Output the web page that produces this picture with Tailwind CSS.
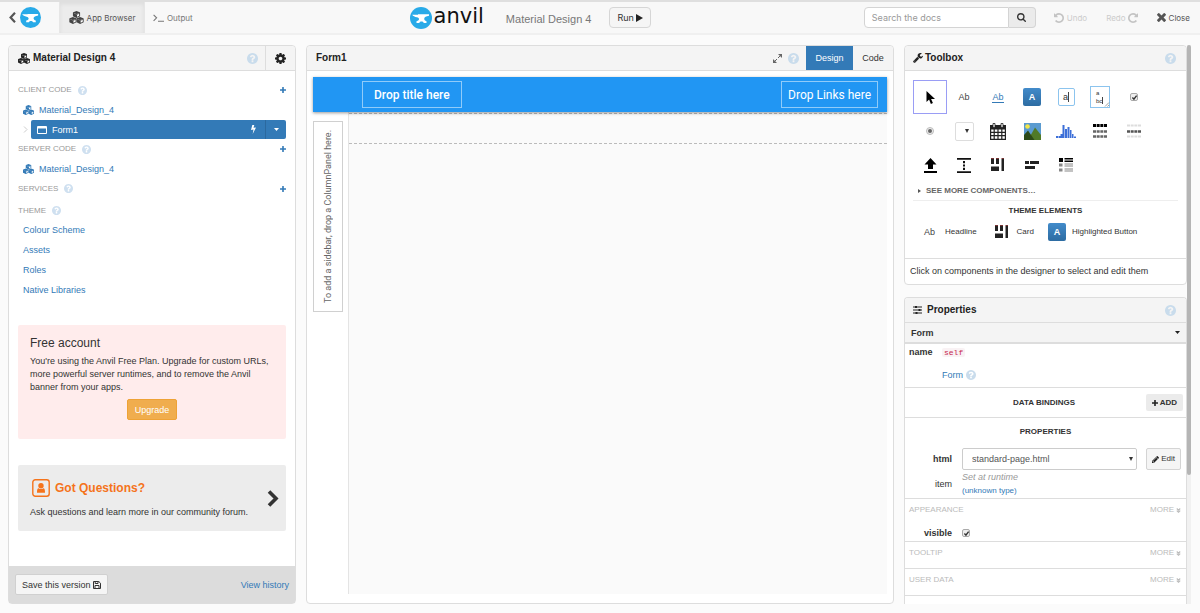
<!DOCTYPE html>
<html lang="en">
<head>
<meta charset="utf-8">
<meta name="viewport" content="width=device-width, initial-scale=1">
<title>Material Design 4 - Anvil</title>
<script src="https://cdn.jsdelivr.net/npm/@tailwindcss/browser@4"></script>
</head>
<body class="flex h-screen flex-col overflow-hidden bg-[#fbfbfb] font-['Liberation_Sans',Arial,sans-serif] text-[9px] leading-3 text-[#333]">

<svg class="hidden" aria-hidden="true">
  <symbol id="cog" viewBox="0 128 1536 1536"><path d="M1024 896q0-106-75-181t-181-75-181 75-75 181 75 181 181 75 181-75 75-181zm512-109v222q0 12-8 23t-20 13l-185 28q-19 54-39 91 35 50 107 138 10 12 10 25t-9 23q-27 37-99 108t-94 71q-12 0-26-9l-138-108q-44 23-91 38-16 136-29 186-7 28-36 28h-222q-14 0-24.500-8.500t-11.500-21.500l-28-184q-49-16-90-37l-141 107q-10 9-25 9-14 0-25-11-126-114-165-168-7-10-7-23 0-12 8-23 15-21 51-66.500t54-70.500q-27-50-41-99l-183-27q-13-2-21-12.500t-8-23.500v-222q0-12 8-23t19-13l186-28q14-46 39-92-40-57-107-138-10-12-10-24 0-10 9-23 26-36 98.500-107.500t94.500-71.500q13 0 26 10l138 107q44-23 91-38 16-136 29-186 7-28 36-28h222q14 0 24.500 8.500t11.500 21.500l28 184q49 16 90 37l142-107q9-9 24-9 13 0 25 10 129 119 165 170 7 8 7 22 0 12-8 23-15 21-51 66.500t-54 70.500q26 50 41 98l183 28q13 2 21 12.500t8 23.500z"/></symbol>
  <symbol id="undo" viewBox="128 128 1536 1536"><path d="M1664 896q0 156-61 298t-164 245-245 164-298 61q-172 0-327-72.500t-264-204.500q-7-10-6.500-22.500t8.500-20.500l137-138q10-9 25-9 16 2 23 12 73 95 179 147t225 52q104 0 198.500-40.500t163.500-109.500 109.500-163.500 40.500-198.500-40.500-198.500-109.500-163.500-163.500-109.500-198.500-40.500q-98 0-188 35.500t-160 101.500l137 138q31 30 14 69-17 40-59 40h-448q-26 0-45-19t-19-45v-448q0-42 40-59 39-17 69 14l130 129q107-101 244.500-156.500t284.500-55.500q156 0 298 61t245 164 164 245 61 298z"/></symbol>
  <symbol id="times" viewBox="300 300 1192 1192"><path d="M1490 1322q0 40-28 68l-136 136q-28 28-68 28t-68-28l-294-294-294 294q-28 28-68 28t-68-28l-136-136q-28-28-28-68t28-68l294-294-294-294q-28-28-28-68t28-68l136-136q28-28 68-28t68 28l294 294 294-294q28-28 68-28t68 28l136 136q28 28 28 68t-28 68l-294 294 294 294q28 28 28 68z" transform="translate(0 -64)"/></symbol>
  <symbol id="help" viewBox="128 128 1536 1536"><path d="M1024 1376v-192q0-14-9-23t-23-9h-192q-14 0-23 9t-9 23v192q0 14 9 23t23 9h192q14 0 23-9t9-23zm256-672q0-88-55.500-163t-138.500-116-170-41q-243 0-371 213-15 24 8 42l132 100q7 6 19 6 16 0 25-12 53-68 86-92 34-24 86-24 48 0 85.500 26t37.500 59q0 38-20 61t-68 45q-63 28-115.500 86.500t-52.500 125.500v36q0 14 9 23t23 9h192q14 0 23-9t9-23q0-19 21.500-49.500t54.500-49.500q32-18 49-28.500t46-35 44.500-48 28-60.500 12.500-81zm384 192q0 209-103 385.500t-279.500 279.500-385.500 103-385.500-103-279.500-279.500-103-385.500 103-385.500 279.500-279.500 385.500-103 385.500 103 279.500 279.500 103 385.500z"/></symbol>
  <symbol id="plus" viewBox="192 128 1408 1408"><path d="M1600 736v192q0 40-28 68t-68 28h-416v416q0 40-28 68t-68 28h-192q-40 0-68-28t-28-68v-416h-416q-40 0-68-28t-28-68v-192q0-40 28-68t68-28h416v-416q0-40 28-68t68-28h192q40 0 68 28t28 68v416h416q40 0 68 28t28 68z"/></symbol>
  <symbol id="search" viewBox="64 128 1664 1664"><path d="M1216 832q0-185-131.500-316.500t-316.500-131.500-316.500 131.500-131.500 316.500 131.500 316.500 316.500 131.500 316.500-131.500 131.500-316.500zm512 832q0 52-38 90t-90 38q-54 0-90-38l-343-342q-179 124-399 124-143 0-273.500-55.500t-225-150-150-225-55.500-273.500 55.500-273.500 150-225 225-150 273.500-55.500 273.500 55.500 225 150 150 225 55.500 273.500q0 220-124 399l343 343q37 37 37 90z"/></symbol>
  <symbol id="wrench" viewBox="64 128 1664 1664"><path d="M448 1472q0-26-19-45t-45-19-45 19-19 45 19 45 45 19 45-19 19-45zm644-420l-682 682q-37 37-90 37-52 0-91-37l-106-108q-38-36-38-90 0-53 38-91l681-681q39 98 114.500 173.500t173.500 114.500zm634-435q0 39-23 106-47 134-164.500 217.500t-258.500 83.500q-185 0-316.500-131.500t-131.500-316.500 131.500-316.500 316.500-131.500q58 0 121.500 16.500t107.500 46.500q16 11 16 28t-16 28l-293 169v224l193 107q5-3 79-48.500t135.500-81 70.500-35.500q15 0 23.500 10t8.500 25z"/></symbol>
  <symbol id="pencil" viewBox="128 128 1536 1536"><path d="M491 1536l91-91-235-235-91 91v107h128v128h107zm523-928q0-22-22-22-10 0-17 7l-542 542q-7 7-7 17 0 22 22 22 10 0 17-7l542-542q7-7 7-17zm-54-192l416 416-832 832h-416v-416zm683 96q0 53-37 90l-166 166-416-416 166-165q36-38 90-38 53 0 91 38l235 234q37 39 37 91z"/></symbol>
  <symbol id="cubes" viewBox="0.8 0 26.400 24">
    <g id="cube1"><path fill="currentColor" d="M14 0l6 2.300a1 1 0 0 1 .6 1v6.400l-6.600 3.300-6.600-3.300V3.300a1 1 0 0 1 .6-1z"/><path fill="#fff" d="M15 6.800l3.900-1.600v3.700L15 10.800z"/><path fill="#fff" opacity=".5" d="M9.300 3.700l4.700 1.900 4.700-1.900v.9L14 6.500 9.300 4.600z"/></g>
    <use href="#cube1" x="-6.600" y="11"/><use href="#cube1" x="6.600" y="11"/>
  </symbol>
  <symbol id="anvil" viewBox="0 0 44 44"><circle cx="22" cy="22" r="22" fill="#28aae8"/><path fill="#fff" d="M16 14.500h22v3.200c-6 .8-9 2.800-9.500 5.300-.3 2.500 1.500 4.500 4.500 5.500v3.500h-5.500c-1-2-2.500-2.800-4.500-2.800s-3.500.8-4.500 2.800h-5.500v-3.500c3.500-1 5.500-2.500 5-5-.5-2-2-2.800-4-3.200-4.500-.8-8-2.300-9.500-5h11.500z"/></symbol>
  <symbol id="tick" viewBox="0 0 10 10"><path fill="none" stroke="#333" stroke-width="2" d="M2 5l2.200 2.400L8 2.300"/></symbol>
  <symbol id="more" viewBox="0 0 10 10"><path fill="none" stroke="currentColor" stroke-width="2.200" d="M1.500 1L5 4.300 8.500 1M1.500 5.200L5 8.500l3.500-3.300"/></symbol>
  <symbol id="card" viewBox="0 0 14 14"><path fill="#222" d="M0 1h3v5H0zM5 1h3v5H5zM0 8.500h8V13H0zM10.500 1H13v12h-2.500z"/><path fill="#733" d="M0 0h3v1H0zM5 0h3v1H5zM10.500 0H13v1h-2.500z"/></symbol>
</svg>

<header class="flex h-[35px] shrink-0 items-stretch border-t-2 border-b-2 border-t-[#dfdfdf] border-b-[#f0f0f0] bg-[#f8f8f8] font-[Inter,sans-serif] text-[8px] text-[#666]">
  <a href="#" aria-label="Back to apps" class="flex w-[59px] shrink-0 items-center gap-1 pl-[9px]">
    <svg class="h-[11px] w-[7px]" viewBox="0 0 7 11"><path fill="none" stroke="#555" stroke-width="2.200" d="M6 .8L1.600 5.500 6 10.200"/></svg>
    <svg class="size-[21px]"><use href="#anvil"/></svg>
  </a>
  <button class="flex w-[86px] shrink-0 items-center justify-center gap-[3px] border-x border-[#e6e6e6] bg-[#ececec] text-[#555] shadow-[inset_0_2px_4px_#0001]"><svg class="h-[13px] w-[15px] text-[#444]"><use href="#cubes"/></svg>App Browser</button>
  <button class="flex shrink-0 items-center gap-[3px] pl-2 text-[#777]"><svg class="h-2 w-[11px]" viewBox="0 0 11 8"><path fill="none" stroke="#777" stroke-width="1.100" d="M.6.8L3.600 3.800.6 6.800M5 7.200h6"/></svg>Output</button>
  <div class="flex flex-1 items-center justify-center gap-[22px] pl-1">
    <div class="flex items-center gap-[2px]"><svg class="size-[22px]"><use href="#anvil"/></svg><span class="-mt-1 font-['DejaVu_Sans',sans-serif] text-[21px] leading-[22px] text-[#111]">anvil</span></div>
    <span class="pt-0.5 font-['Liberation_Sans',sans-serif] text-[11px] text-[#777]">Material Design 4</span>
    <button class="-ml-1 flex h-[21px] items-center gap-[2px] rounded-sm border border-[#d6d6d6] bg-[#f5f5f5] px-[7px] text-[9px] text-[#333]">Run<svg class="h-2 w-[7px]" viewBox="0 0 7 8"><path fill="#222" d="M0 0l7 4-7 4z"/></svg></button>
  </div>
  <form class="flex shrink-0 items-center" onsubmit="return false">
    <input type="text" aria-label="Search the docs" placeholder="Search the docs" class="h-[21px] w-[145px] rounded-l-sm border border-[#d4d4d4] bg-white px-[7px] text-[9px] placeholder:text-[#999]">
    <button aria-label="Search" class="flex h-[21px] w-[27px] items-center justify-center rounded-r-sm border border-l-0 border-[#d4d4d4] bg-[#ebebeb]"><svg class="size-[9px] fill-[#333]"><use href="#search"/></svg></button>
  </form>
  <button class="flex shrink-0 items-center gap-[3px] pl-[18px] text-[#ccc]"><svg class="size-[10px] fill-[#c4c4c4]"><use href="#undo"/></svg>Undo</button>
  <button class="flex shrink-0 items-center gap-[2px] pl-[19px] text-[#ccc]">Redo<svg class="size-[10px] -scale-x-100 fill-[#c4c4c4]"><use href="#undo"/></svg></button>
  <button class="flex shrink-0 items-center gap-[3px] pr-[10px] pl-[19px] text-[#555]"><svg class="size-[9px] fill-[#555]"><use href="#times"/></svg>Close</button>
</header>

<main class="flex min-h-0 flex-1 gap-[10px] pt-[10px] pr-[9px] pb-[9px] pl-2">

  <!-- App browser -->
  <section class="flex w-[288px] shrink-0 flex-col rounded-sm border border-[#ddd] bg-white">
    <div class="flex h-[25px] shrink-0 items-center rounded-t-sm border-b border-[#ddd] bg-[#f4f4f4] pl-[9px]">
      <svg class="mr-[3px] h-[11px] w-3 text-[#222]"><use href="#cubes"/></svg>
      <h2 class="flex-1 text-[10px] font-bold text-[#222]">Material Design 4</h2>
      <button aria-label="Help"><svg class="mr-[7px] size-[11px] fill-[#c9dcec]"><use href="#help"/></svg></button>
      <button aria-label="Settings" class="flex h-full w-[30px] items-center justify-center border-l border-[#ddd]"><svg class="size-[11px] fill-[#222]"><use href="#cog"/></svg></button>
    </div>
    <div class="flex min-h-0 flex-1 flex-col px-[9px] pt-[9px] text-[#337ab7]">
      <div class="flex h-5 shrink-0 items-center gap-[6px] text-[8px] text-[#999]">CLIENT CODE<svg class="size-[9px] fill-[#cfe0f0]"><use href="#help"/></svg><button aria-label="Add client code" class="ml-auto"><svg class="size-[6px] fill-[#337ab7]"><use href="#plus"/></svg></button></div>
      <a href="#" class="flex h-5 shrink-0 items-center gap-[5px] pl-[5px]"><svg class="h-[10px] w-[11px]"><use href="#cubes"/></svg>Material_Design_4</a>
      <div class="flex h-[19px] shrink-0 items-center">
        <svg class="ml-[5px] h-[7px] w-[8px]" viewBox="0 0 8 7"><path fill="none" stroke="#ccc" d="M1 .5l3 3-3 3"/></svg>
        <a href="#" class="flex h-full flex-1 items-center gap-[5px] rounded-l-xs bg-[#337ab7] pr-[9px] pl-[6px] text-white"><svg class="h-2 w-[10px]" viewBox="0 0 10 8"><path fill="#fff" fill-rule="evenodd" d="M1 0h8a1 1 0 0 1 1 1v6a1 1 0 0 1-1 1H1a1 1 0 0 1-1-1V1a1 1 0 0 1 1-1zm0 2.500V7h8V2.500z"/></svg><span class="flex-1">Form1</span><svg class="h-[9px] w-[5px]" viewBox="0 0 5 9"><path fill="#fff" d="M1.300 0h2L2.500 2.800 5 2.400 1.700 9l.8-4.400L0 5z"/></svg></a>
        <button aria-label="Form1 menu" class="flex h-full w-[21px] items-center justify-center rounded-r-xs border-l border-[#2b699f] bg-[#337ab7]"><svg class="h-[3px] w-[5px]" viewBox="0 0 5 3"><path fill="#fff" d="M0 0h5L2.500 3z"/></svg></button>
      </div>
      <div class="flex h-5 shrink-0 items-center gap-[6px] text-[8px] text-[#999]">SERVER CODE<svg class="size-[9px] fill-[#cfe0f0]"><use href="#help"/></svg><button aria-label="Add server code" class="ml-auto"><svg class="size-[6px] fill-[#337ab7]"><use href="#plus"/></svg></button></div>
      <a href="#" class="flex h-5 shrink-0 items-center gap-[5px] pl-[5px]"><svg class="h-[10px] w-[11px]"><use href="#cubes"/></svg>Material_Design_4</a>
      <div class="flex h-[19px] shrink-0 items-center gap-[6px] text-[8px] text-[#999]">SERVICES<svg class="size-[9px] fill-[#cfe0f0]"><use href="#help"/></svg><button aria-label="Add service" class="ml-auto"><svg class="size-[6px] fill-[#337ab7]"><use href="#plus"/></svg></button></div>
      <div class="mt-[3px] flex h-[19px] shrink-0 items-center gap-[6px] text-[8px] text-[#999]">THEME<svg class="size-[9px] fill-[#cfe0f0]"><use href="#help"/></svg></div>
      <nav class="flex shrink-0 flex-col items-start gap-2 pt-1 pl-[5px]">
        <a href="#">Colour Scheme</a><a href="#">Assets</a><a href="#">Roles</a><a href="#">Native Libraries</a>
      </nav>
      <div class="mt-[29px] h-[114px] shrink-0 rounded-xs bg-[#ffecec] px-3 pt-[11px] text-[#333]">
        <h3 class="text-[12px] leading-[14px]">Free account</h3>
        <p class="pt-[5px] leading-[13px]">You're using the Anvil Free Plan. Upgrade for custom URLs, more powerful server runtimes, and to remove the Anvil banner from your apps.</p>
        <div class="pt-[5px] text-center"><button class="h-[21px] rounded-xs border border-[#eea236] bg-[#f0ad4e] px-[7px] text-white">Upgrade</button></div>
      </div>
      <a href="#" class="mt-[26px] flex h-[66px] shrink-0 items-center rounded-xs bg-[#ececec] pr-[7px] pl-3 text-[#333]">
        <span class="flex-1">
          <span class="flex items-center gap-[5px] pl-[2px] text-[12px] font-bold text-[#f5731b]"><svg class="size-[18px]" viewBox="0 0 18 18"><rect x=".8" y=".8" width="16.400" height="16.400" rx="2.500" fill="none" stroke="#f5731b" stroke-width="1.400"/><circle cx="9" cy="6.800" r="2.700" fill="#f5731b"/><path fill="#f5731b" d="M5 13.800c0-3 .3-4.600 1.700-4.600 1.300 1.200 3.300 1.200 4.600 0 1.400 0 1.700 1.600 1.700 4.600z"/></svg>Got Questions?</span>
          <span class="block pt-[9px]">Ask questions and learn more in our community forum.</span>
        </span>
        <svg class="h-[17px] w-3" viewBox="0 0 12 17"><path fill="none" stroke="#333" stroke-width="3.600" d="M2 1.500l7 7-7 7"/></svg>
      </a>
    </div>
    <div class="flex h-[37px] shrink-0 items-center justify-between bg-[#dcdcdc] px-[6px]">
      <button class="flex h-[21px] items-center gap-[2px] rounded-xs border border-[#d0d0d0] bg-[#f5f5f5] px-[6px]">Save this version<svg class="size-2" viewBox="0 0 8 8"><path fill="none" stroke="#333" d="M.5.500h5.300l1.700 1.700v5.300h-7zM2 7.500v-3h4v3M2.200.500v2h2.800v-2"/></svg></button>
      <a href="#" class="text-[#337ab7]">View history</a>
    </div>
  </section>

  <!-- Form designer -->
  <section class="flex min-w-0 flex-1 flex-col rounded-sm border border-[#ddd] bg-white">
    <div class="flex h-[25px] shrink-0 items-center rounded-t-sm border-b border-[#ddd] bg-[#f4f4f4] pl-[9px]">
      <h2 class="flex-1 text-[10px] font-bold text-[#222]">Form1</h2>
      <button aria-label="Expand" class="mr-[6px]"><svg class="size-[9px]" viewBox="0 0 9 9"><path fill="#666" d="M5 0h4v4zM0 5v4h4z"/><path stroke="#666" d="M1.500 7.500L4 5M5 4l2.500-2.500"/></svg></button>
      <button aria-label="Help" class="mr-[7px]"><svg class="size-[11px] fill-[#c9dcec]"><use href="#help"/></svg></button>
      <button class="h-full w-[47px] bg-[#337ab7] text-white">Design</button>
      <button class="h-full w-10">Code</button>
    </div>
    <div class="flex min-h-0 flex-1 flex-col px-[6px] pt-[6px] pb-[9px]">
      <div class="z-10 flex h-[35px] shrink-0 items-center justify-between bg-[#2196f3] pr-[9px] pl-[49px] font-[Roboto,sans-serif] text-[12px] text-white shadow-[0_1px_3px_#0006]">
        <div class="flex h-[27px] items-center border border-white/50 px-[11px] font-medium">Drop title here</div>
        <div class="flex h-[27px] items-center border border-white/50 px-[6px]">Drop Links here</div>
      </div>
      <div class="flex min-h-0 flex-1">
        <div class="w-9 shrink-0 border-r border-[#e4e4e4] pt-[9px]">
          <div class="flex h-[191px] w-[30px] items-center justify-center border border-[#d0d0d0]"><span class="rotate-180 font-[Roboto,sans-serif] text-[9px] text-[#666] [writing-mode:vertical-rl]">To add a sidebar, drop a ColumnPanel here.</span></div>
        </div>
        <div class="min-w-0 flex-1 bg-[#fafafa] pt-px"><div class="h-[31px] border-y border-dashed border-[#bbb]"></div></div>
      </div>
    </div>
  </section>

  <!-- Toolbox and properties -->
  <div class="flex w-[287px] shrink-0">
    <div class="flex min-w-0 flex-1 flex-col gap-3">
      <section class="h-[240px] shrink-0 rounded-sm border border-[#ddd] bg-white">
        <div class="flex h-[25px] items-center rounded-t-sm border-b border-[#ddd] bg-[#f4f4f4] pr-[10px] pl-2">
          <svg class="mr-[2px] size-[10px] fill-[#222]"><use href="#wrench"/></svg><h2 class="flex-1 text-[10px] font-bold text-[#222]">Toolbox</h2>
          <button aria-label="Help"><svg class="size-[11px] fill-[#c9dcec]"><use href="#help"/></svg></button>
        </div>
        <div class="px-2 pt-[9px]">
          <div class="grid grid-cols-[repeat(7,34px)] auto-rows-[34px] *:flex *:items-center *:justify-center">
            <button aria-label="Select" class="border border-[#9a9df5]"><svg class="h-[13px] w-[9px]" viewBox="0 0 9 13"><path d="M.5 0v11l2.600-2.400L4.900 13l2-.9-1.800-4.200H9z"/></svg></button>
            <button class="text-[#444]">Ab</button>
            <button class="text-[#337ab7]"><span class="border-b border-[#337ab7] leading-[10px]">Ab</span></button>
            <button><span class="flex size-[18px] items-center justify-center rounded-xs bg-linear-to-b from-[#428bca] to-[#2d6ca2] font-bold text-white">A</span></button>
            <button><span class="flex h-[18px] w-[17px] items-center justify-center rounded-xs border border-[#8cc4ee]"><span class="border-r border-[#444] leading-[10px]">a</span></span></button>
            <button><svg class="h-[22px] w-5" viewBox="0 0 20 22"><rect x=".5" y=".5" width="19" height="21" fill="#fff" stroke="#8cc4ee"/><path fill="none" stroke="#888" stroke-width=".8" d="M15 20.500l4-4M17.500 20.500l1.500-1.500"/><path stroke="#444" d="M12.500 11v7"/><text x="6" y="9" font-size="6" fill="#333">a</text><text x="6" y="17" font-size="6" fill="#333">bc</text></svg></button>
            <label class="relative"><input type="checkbox" checked aria-label="CheckBox" class="size-2 appearance-none rounded-xs border border-[#aaa] bg-[#eee]"><svg class="pointer-events-none absolute size-[7px]"><use href="#tick"/></svg></label>
            <label class="relative"><input type="radio" checked aria-label="RadioButton" class="size-2 appearance-none rounded-full border border-[#bbb] bg-[#eee]"><span class="pointer-events-none absolute size-1 rounded-full bg-[#666]"></span></label>
            <button aria-label="DropDown"><span class="flex size-[19px] items-center justify-end rounded-xs border border-[#ddd] pr-1"><svg class="h-1 w-[4px]" viewBox="0 0 4 4"><path fill="#333" d="M0 0h4L2 4z"/></svg></span></button>
            <button aria-label="DatePicker"><svg class="h-[17px] w-4" viewBox="0 0 16 17"><path fill="#222" fill-rule="evenodd" d="M0 2h16v15H0zM1.200 6.500v2.200h2.400V6.500zm3.600 0v2.200h2.600V6.500zm3.800 0v2.200h2.600V6.500zm3.800 0v2.200h2.400V6.500zM1.200 9.900v2.200h2.400V9.900zm3.600 0v2.200h2.600V9.900zm3.800 0v2.200h2.600V9.900zm3.800 0v2.200h2.400V9.900zM1.200 13.300v2.400h2.400v-2.400zm3.600 0v2.400h2.600v-2.400zm3.800 0v2.400h2.600v-2.400zm3.800 0v2.400h2.400v-2.400z"/><path fill="#fff" stroke="#222" stroke-width=".8" d="M3 .500h2v4H3zM11 .500h2v4h-2z"/></svg></button>
            <button aria-label="Image"><svg class="h-[17px] w-[17px]" viewBox="0 0 17 17"><path fill="#5b9bd0" d="M0 0h17v17H0z"/><circle cx="3.500" cy="3.500" r="2.300" fill="#f2e64a"/><path fill="#507a28" d="M4 17l7-12.500L17 12v5z"/><path fill="#2c4a18" d="M0 17v-5l4-4.500L10.500 17z"/></svg></button>
            <button aria-label="Plot"><svg class="h-[14px] w-5" viewBox="0 0 20 14"><path fill="#3c6fd8" d="M0 12h2v2H0zM2.500 12h2v2h-2zM4.500 10h2v4h-2zM6.500 1h2v13h-2zM9 5h2v9H9zM11.500 3h2v11h-2zM14 6h1.500v8H14zM16 10h1.500v4H16zM18 12.500h2V14h-2z"/></svg></button>
            <button aria-label="DataGrid"><svg class="h-[14px] w-[14px]" viewBox="0 0 14 14" fill="none" stroke-dasharray="3 .67"><path stroke="#000" stroke-width="3" d="M0 1.500h14"/><path stroke="#666" stroke-width="2.300" d="M0 7.500h14M0 12.500h14"/></svg></button>
            <button aria-label="DataRowPanel"><svg class="h-[14px] w-[14px]" viewBox="0 0 14 14" fill="none" stroke-dasharray="3 .67"><path stroke="#ddd" stroke-width="2" d="M0 1.500h14M0 12.500h14"/><path stroke="#555" stroke-width="2.300" d="M0 7.500h14"/></svg></button>
            <button aria-label="FileLoader"><svg class="h-[15px] w-[13px]" viewBox="0 0 13 15"><path d="M6.500 0l6 6.500H9V11H4V6.500H.5zM0 13h13v2H0z"/></svg></button>
            <button aria-label="Spacer"><svg class="h-[15px] w-[14px]" viewBox="0 0 14 15"><path fill="#111" d="M0 0h14v1.700H0zM0 13.300h14V15H0zM6 3h2v2.300H6zM6 6.500h2v2H6zM6 9.700h2V12H6z"/></svg></button>
            <button aria-label="XYPanel"><svg class="size-[14px]"><use href="#card"/></svg></button>
            <button aria-label="FlowPanel"><svg class="h-[9px] w-[14px]" viewBox="0 0 14 9"><path fill="#222" d="M0 0h4v3H0zM5 0h9v3H5zM0 5h10v3H0z"/></svg></button>
            <button aria-label="RepeatingPanel"><svg class="size-[14px]" viewBox="0 0 14 14"><path d="M0 0h4v4H0zM5.500 0H14v1.500H5.500zM5.500 2.500H14V4H5.500z"/><path fill="#888" d="M0 5.500h3.500v3H0zM5.500 5.500H14v1H5.500zM5.500 7.500H14v1H5.500zM0 10.500h3.500v3H0zM5.500 10.500H14v1H5.500zM5.500 12.500H14v1H5.500z"/></svg></button>
          </div>
          <button class="flex h-[19px] w-full items-center gap-[5px] border-b border-[#eee] pl-[5px] text-[8px] font-bold text-[#666]"><svg class="h-1 w-[3px]" viewBox="0 0 3 4"><path fill="#555" d="M0 0l3 2-3 2z"/></svg>SEE MORE COMPONENTS…</button>
          <h3 class="h-[18px] pt-1 text-center text-[8px] font-bold">THEME ELEMENTS</h3>
          <div class="flex h-[26px] items-center pl-[11px] text-[8px]">
            <button class="flex items-center gap-[10px]"><span class="text-[9px] text-[#444]">Ab</span>Headline</button>
            <button class="flex items-center gap-2 pl-[18px]"><svg class="size-[14px]"><use href="#card"/></svg>Card</button>
            <button class="flex items-center gap-[6px] pl-[14px]"><span class="flex size-[18px] items-center justify-center rounded-xs bg-linear-to-b from-[#428bca] to-[#2d6ca2] text-[9px] font-bold text-white">A</span>Highlighted Button</button>
          </div>
        </div>
        <p class="mt-[13px] border-t border-[#ddd] pt-[6px] pl-[5px]">Click on components in the designer to select and edit them</p>
      </section>

      <section class="min-h-0 flex-1 overflow-hidden rounded-t-sm border border-b-0 border-[#ddd] bg-white">
        <div class="flex h-[25px] items-center border-b border-[#ddd] bg-[#f4f4f4] pr-[10px] pl-2">
          <svg class="mr-[5px] h-2 w-[9px]" viewBox="0 0 9 8"><path fill="#222" d="M0 .500h9v1H0zM0 3.500h9v1H0zM0 6.500h9v1H0zM2 0h2v2H2zM5.500 3h2v2h-2zM2.500 6h2v2h-2z"/></svg><h2 class="flex-1 text-[10px] font-bold text-[#222]">Properties</h2>
          <button aria-label="Help"><svg class="size-[11px] fill-[#c9dcec]"><use href="#help"/></svg></button>
        </div>
        <button class="flex h-[21px] w-full items-center justify-between border-b-2 border-[#ddd] bg-[#f4f4f4] px-[6px] font-bold">Form<svg class="h-[3px] w-[5px]" viewBox="0 0 5 3"><path fill="#222" d="M0 0h5L2.500 3z"/></svg></button>
        <div class="grid h-11 grid-cols-[33px_1fr] content-between border-b border-[#ddd] pt-[2px] pb-[6px] pl-1">
          <b>name</b><div><code class="rounded-xs bg-[#f9f2f4] px-[2px] font-['Liberation_Mono',monospace] text-[8px] text-[#c7254e]">self</code></div>
          <a href="#" class="col-start-2 flex items-center gap-[3px] text-[#337ab7]">Form<svg class="size-[10px] fill-[#c9dcec]"><use href="#help"/></svg></a>
        </div>
        <div class="grid h-[30px] grid-cols-[1fr_auto_1fr] items-center border-b border-[#ddd] pr-[3px] text-[8px] font-bold">
          <h3 class="col-start-2">DATA BINDINGS</h3><button class="flex h-[17px] items-center gap-[2px] justify-self-end rounded-xs bg-[#ebebeb] px-[6px]"><svg class="size-[6px] fill-[#222]"><use href="#plus"/></svg>ADD</button>
        </div>
        <div class="border-b border-[#ddd]">
          <h3 class="h-[30px] pt-2 text-center text-[8px] font-bold">PROPERTIES</h3>
          <div class="flex h-[22px] items-center">
            <label for="html" class="w-[47px] text-right font-bold">html</label>
            <div class="relative mr-[9px] ml-[10px] flex-1">
              <select id="html" class="h-[22px] w-full appearance-none rounded-xs border border-[#ccc] bg-white pl-[9px] text-[#555]"><option>standard-page.html</option></select>
              <svg class="pointer-events-none absolute top-[9px] right-1 h-1 w-[4px]" viewBox="0 0 4 4"><path fill="#333" d="M0 0h4L2 4z"/></svg>
            </div>
            <button class="mr-[5px] flex h-[22px] items-center gap-[2px] rounded-xs border border-[#d4d4d4] bg-[#f5f5f5] px-[5px] text-[8px]"><svg class="size-[7px] fill-[#222]"><use href="#pencil"/></svg>Edit</button>
          </div>
          <div class="flex h-7 items-center">
            <span class="w-[47px] text-right">item</span>
            <div class="ml-[10px] leading-[13px]"><i class="block text-[#999]">Set at runtime</i><a href="#" class="block text-[8px] text-[#337ab7]">(unknown type)</a></div>
          </div>
        </div>
        <div class="h-[43px] border-b border-[#ddd] pt-[5px] pr-[5px] pl-1">
          <div class="flex justify-between text-[8px] text-[#bbb]"><span>APPEARANCE</span><button class="flex items-center gap-[2px]">MORE<svg class="size-[5px]"><use href="#more"/></svg></button></div>
          <label class="relative mt-[11px] flex items-center gap-[10px]"><b class="w-[43px] text-right">visible</b><span class="relative flex items-center justify-center"><input type="checkbox" checked class="size-2 appearance-none rounded-xs border border-[#aaa] bg-[#eee]"><svg class="pointer-events-none absolute size-[7px]"><use href="#tick"/></svg></span></label>
        </div>
        <div class="flex h-[27px] justify-between border-b border-[#ddd] pt-[5px] pr-[5px] pl-1 text-[8px] leading-3 text-[#bbb]"><span>TOOLTIP</span><button class="flex h-3 items-center gap-[2px]">MORE<svg class="size-[5px]"><use href="#more"/></svg></button></div>
        <div class="flex h-[27px] justify-between border-b border-[#ddd] pt-[5px] pr-[5px] pl-1 text-[8px] leading-3 text-[#bbb]"><span>USER DATA</span><button class="flex h-3 items-center gap-[2px]">MORE<svg class="size-[5px]"><use href="#more"/></svg></button></div>
      </section>
    </div>
    <div class="w-1 shrink-0 bg-[#f1f1f1]"><div class="h-[77%] rounded-xs bg-[#b5b5b5]"></div></div>
  </div>
</main>
</body>
</html>
